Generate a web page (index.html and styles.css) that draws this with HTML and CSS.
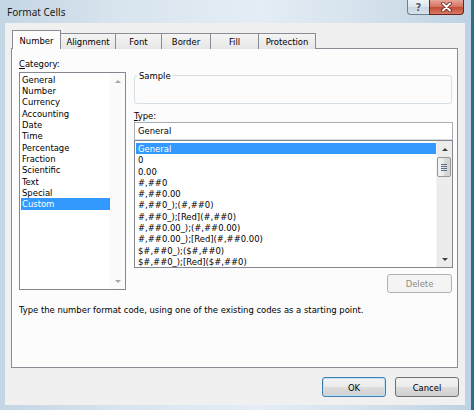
FILE: index.html
```html
<!DOCTYPE html>
<html>
<head>
<meta charset="utf-8">
<title>Format Cells</title>
<link rel="stylesheet" href="styles.css">
</head>
<body>
<div class="window">
  <div class="titlebar">
    <span class="title">Format Cells</span>
    <div class="caption-btns">
      <div class="cbtn help">?</div>
      <div class="cbtn close">
        <svg width="13" height="10" viewBox="0 0 13 10"><path d="M3 1.5 L10 8.5 M10 1.5 L3 8.5" stroke="#6a2015" stroke-width="3.6" stroke-linecap="round" fill="none"/><path d="M3 1.5 L10 8.5 M10 1.5 L3 8.5" stroke="#ffffff" stroke-width="2" stroke-linecap="round" fill="none"/></svg>
      </div>
    </div>
  </div>
  <div class="client">
    <div class="tabs">
      <div class="tab selected tab-number">Number</div>
      <div class="tab tab-alignment">Alignment</div>
      <div class="tab tab-font">Font</div>
      <div class="tab tab-border">Border</div>
      <div class="tab tab-fill">Fill</div>
      <div class="tab tab-protection">Protection</div>
    </div>
    <div class="panel">
      <div class="panel-main">
        <div class="col-left">
          <div class="label"><u>C</u>ategory:</div>
          <div class="listbox cat-list">
            <ul class="items">
              <li>General</li>
              <li>Number</li>
              <li>Currency</li>
              <li>Accounting</li>
              <li>Date</li>
              <li>Time</li>
              <li>Percentage</li>
              <li>Fraction</li>
              <li>Scientific</li>
              <li>Text</li>
              <li>Special</li>
              <li class="sel">Custom</li>
            </ul>
            <div class="vscroll disabled">
              <div class="sb-btn"><span class="arrow up"></span></div>
              <div class="sb-btn"><span class="arrow down"></span></div>
            </div>
          </div>
        </div>
        <div class="col-right">
          <fieldset class="sample">
            <legend>Sample</legend>
            <div class="sample-body"></div>
          </fieldset>
          <div class="label type-label"><u>T</u>ype:</div>
          <div class="input">General</div>
          <div class="listbox type-list">
            <ul class="items">
              <li class="sel">General</li>
              <li>0</li>
              <li>0.00</li>
              <li>#,##0</li>
              <li>#,##0.00</li>
              <li>#,##0_);(#,##0)</li>
              <li>#,##0_);[Red](#,##0)</li>
              <li>#,##0.00_);(#,##0.00)</li>
              <li>#,##0.00_);[Red](#,##0.00)</li>
              <li>$#,##0_);($#,##0)</li>
              <li>$#,##0_);[Red]($#,##0)</li>
            </ul>
            <div class="vscroll">
              <div class="sb-btn"><span class="arrow up"></span></div>
              <div class="thumb"><span class="grip"></span></div>
              <div class="sb-space"></div>
              <div class="sb-btn"><span class="arrow down"></span></div>
            </div>
          </div>
          <div class="delete-row">
            <button class="btn disabled" type="button">Delete</button>
          </div>
        </div>
      </div>
      <p class="desc">Type the number format code, using one of the existing codes as a starting point.</p>
    </div>
    <div class="buttons">
      <button class="btn default" type="button">OK</button>
      <button class="btn" type="button">Cancel</button>
    </div>
  </div>
</div>
</body>
</html>
```

FILE: styles.css
```css
* { box-sizing: border-box; }
html, body { margin: 0; padding: 0; }
body {
  width: 474px;
  height: 410px;
  overflow: hidden;
  background: #c9d9e6;
  font-family: "DejaVu Sans Condensed", "Liberation Sans", sans-serif;
  font-size: 9.4px;
  color: #000;
}
.window {
  width: 474px;
  height: 410px;
  display: flex;
  flex-direction: column;
  background: linear-gradient(90deg, #c4d5e3 0%, #d8e4ee 25%, #e4edf5 55%, #d3e0eb 80%, #bdd2e2 100%);
  border-right: 3px solid #2e6b8c;
}
.titlebar {
  flex: none;
  height: 23px;
  display: flex;
  align-items: flex-start;
}
.title {
  font-family: "Noto Sans", sans-serif;
  font-size: 10px;
  line-height: 24px;
  padding-left: 7px;
  color: #1b1b1b;
}
.caption-btns {
  margin-left: auto;
  margin-right: 7px;
  display: flex;
}
.cbtn {
  height: 15px;
  display: flex;
  align-items: center;
  justify-content: center;
}
.help {
  width: 22px;
  border: 1px solid #6f7f8f;
  border-top: none;
  border-right: none;
  border-bottom-left-radius: 4px;
  background: linear-gradient(#eef3f8, #dbe4ec 50%, #c9d5e0 51%, #d7e2ec);
  font-family: "DejaVu Sans", sans-serif;
  font-weight: bold;
  font-size: 10px;
  color: #4b5b6b;
  text-shadow: 0 0 2px #fff;
}
.close {
  width: 35px;
  border: 1px solid #6d2419;
  border-top: none;
  border-bottom-right-radius: 4px;
  background: linear-gradient(#e7a598, #d5705e 50%, #c14a35 51%, #d77a66);
}
.client {
  flex: none;
  height: 382px;
  margin: 0 6px 0 5px;
  background: #f0f0f0;
  padding: 7px 6px 0 6px;
  display: flex;
  flex-direction: column;
}
.tabs {
  flex: none;
  display: flex;
  align-items: flex-end;
  height: 19px;
  margin: 0 0 -1px 1px;
  position: relative;
  z-index: 1;
}
.tab {
  flex: none;
  height: 16px;
  padding: 0;
  text-align: center;
  line-height: 15px;
  border: 1px solid #898c95;
  border-bottom: none;
  margin-left: -1px;
  background: linear-gradient(#f5f5f5, #e6e6e6);
  white-space: nowrap;
}
.tab:first-child { margin-left: 0; }
.tab-number { width: 49px; }
.tab-alignment { width: 56px; }
.tab-font { width: 47px; }
.tab-border { width: 50px; }
.tab-fill { width: 49px; }
.tab-protection { width: 58px; }
.tab.selected {
  height: 19px;
  padding-top: 2px;
  line-height: 16px;
  background: #fcfcfc;
  position: relative;
  z-index: 2;
}
.panel {
  flex: none;
  height: 320px;
  margin-right: 1px;
  border: 1px solid #898c95;
  background: #fcfcfc;
  display: flex;
  flex-direction: column;
}
.panel-main {
  display: flex;
  gap: 8px;
  padding: 9px 0 0 7px;
  align-items: flex-start;
}
.col-left {
  width: 107px;
  display: flex;
  flex-direction: column;
}
.label {
  line-height: 11px;
  height: 11px;
  white-space: nowrap;
}
.col-left .label { margin-bottom: 3px; }
.listbox {
  border: 1px solid #828790;
  background: #fff;
  display: flex;
  overflow: hidden;
}
.cat-list { height: 218px; }
.items {
  list-style: none;
  margin: 0;
  padding: 0.5px 0 0 1px;
  flex: 1;
  min-width: 0;
  overflow: hidden;
}
.items li {
  line-height: 11.36px;
  height: 11.36px;
  padding-left: 1px;
  white-space: nowrap;
}
.items li.sel {
  background: #3399ff;
  color: #fff;
}
.vscroll {
  flex: none;
  width: 15px;
  display: flex;
  flex-direction: column;
  justify-content: space-between;
  background: #fafafa;
}
.sb-btn {
  flex: none;
  height: 16px;
  display: flex;
  align-items: center;
  justify-content: center;
}
.arrow {
  width: 0;
  height: 0;
  border-left: 3px solid transparent;
  border-right: 3px solid transparent;
}
.arrow.up { border-bottom: 3px solid #3d3d3d; }
.arrow.down { border-top: 3px solid #3d3d3d; }
.vscroll.disabled .arrow.up { border-bottom-color: #a7a7a7; }
.vscroll.disabled .arrow.down { border-top-color: #a7a7a7; }
.col-right {
  width: 319px;
  display: flex;
  flex-direction: column;
}
fieldset.sample {
  margin: 12px 1px 0 0;
  padding: 0;
  border: 1px solid #d5dfe5;
  border-radius: 3px;
  min-width: 0;
}
fieldset.sample legend {
  padding: 0 2px;
  margin-left: 2px;
  line-height: 11px;
}
.sample-body { height: 22px; }
.type-label {
  margin-top: 6px;
  margin-bottom: 1px;
}
.input {
  height: 18px;
  border: 1px solid #abadb3;
  border-bottom-color: #d6dbe2;
  background: #fff;
  line-height: 16px;
  padding-left: 3px;
}
.type-list { height: 128px; }
.type-list .items { padding: 2px 0 0 1px; }
.type-list .items li {
  line-height: 11.3px;
  height: 11.3px;
  padding-left: 2px;
}
.type-list .vscroll {
  width: 16px;
  justify-content: flex-start;
  background: #ececec;
  border-left: 1px solid #f4f4f4;
}
.thumb {
  flex: none;
  height: 20px;
  margin: 0 1px 0 0;
  border: 1px solid #979797;
  border-radius: 2px;
  background: linear-gradient(90deg, #f4f4f4, #e8e8e8 50%, #dadada 51%, #d3d3d3);
  display: flex;
  align-items: center;
  justify-content: center;
}
.grip {
  width: 6px;
  height: 7px;
  background: repeating-linear-gradient(#5f6f82 0 1px, transparent 1px 2px);
}
.sb-space { flex: 1; }
.delete-row {
  display: flex;
  justify-content: flex-end;
  margin-top: 6px;
  padding-right: 1px;
}
.btn {
  height: 19px;
  width: 65px;
  font: inherit;
  border: 1px solid #707070;
  border-radius: 3px;
  background: linear-gradient(#f2f2f2 0, #ebebeb 50%, #dddddd 51%, #cfcfcf 100%);
  color: #000;
  padding: 0;
  line-height: 17px;
}
.btn.disabled {
  border-color: #adb2b5;
  background: #f4f4f4;
  color: #8a8a8a;
}
.desc {
  margin: 11px 0 0 0;
  padding-left: 7px;
  line-height: 11px;
  white-space: nowrap;
}
.buttons {
  display: flex;
  justify-content: flex-end;
  gap: 9px;
  margin-top: 9px;
}
.buttons .btn {
  width: 64px;
  height: 20px;
}
.btn.default {
  border-color: #3c7fb1;
  box-shadow: inset 0 0 0 1px #bfe3f5;
}
```
